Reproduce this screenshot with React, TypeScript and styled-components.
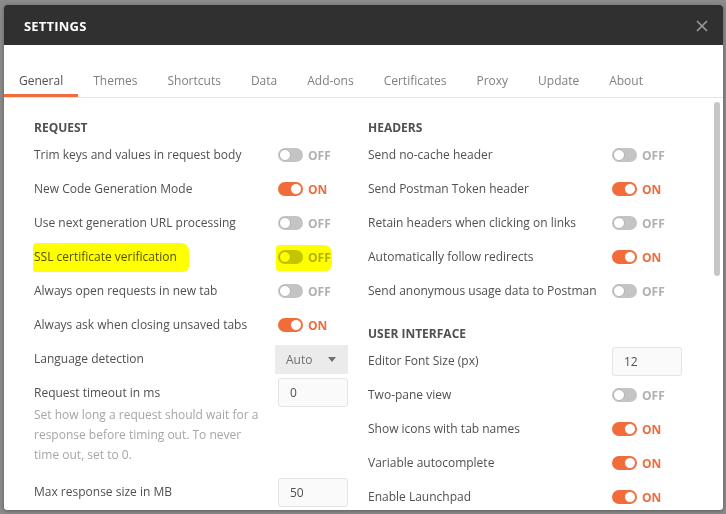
import * as React from "react";
import { createGlobalStyle, styled, css } from "styled-components";

const GlobalStyle = createGlobalStyle`
    html, body {
        margin: 0;
        padding: 0;
        background: #8b8b8b;
    }
    body {
        font-family: "Open Sans", "Liberation Sans", sans-serif;
    }
`;

type ToggleSetting = { label: string; on: boolean; marked?: boolean };

const requestToggles: ToggleSetting[] = [
    { label: "Trim keys and values in request body", on: false },
    { label: "New Code Generation Mode", on: true },
    { label: "Use next generation URL processing", on: false },
    { label: "SSL certificate verification", on: false, marked: true },
    { label: "Always open requests in new tab", on: false },
    { label: "Always ask when closing unsaved tabs", on: true },
];

const headerToggles: ToggleSetting[] = [
    { label: "Send no-cache header", on: false },
    { label: "Send Postman Token header", on: true },
    { label: "Retain headers when clicking on links", on: false },
    { label: "Automatically follow redirects", on: true },
    { label: "Send anonymous usage data to Postman", on: false },
];

const uiToggles: ToggleSetting[] = [
    { label: "Two-pane view", on: false },
    { label: "Show icons with tab names", on: true },
    { label: "Variable autocomplete", on: true },
    { label: "Enable Launchpad", on: true },
];

const tabs = ["General", "Themes", "Shortcuts", "Data", "Add-ons", "Certificates", "Proxy", "Update", "About"];

const Page = styled.div`
    height: 514px;
    box-sizing: border-box;
    padding: 5px 3px 4px 4px;
    overflow: hidden;
`;

const Modal = styled.div`
    height: 505px;
    display: flex;
    flex-direction: column;
    background: #ffffff;
    border-radius: 3px;
    overflow: hidden;
    box-shadow: 0 1px 4px rgba(0, 0, 0, 0.35);
`;

const TitleBar = styled.div`
    flex: 0 0 40px;
    display: flex;
    align-items: center;
    justify-content: space-between;
    background: #303030;
    padding: 1px 14px 0 20px;
    box-sizing: border-box;
`;

const Title = styled.div`
    color: #ffffff;
    font-size: 13px;
    font-weight: 700;
    letter-spacing: 0.2px;
`;

const CloseButton = styled.div`
    width: 14px;
    height: 14px;
    display: flex;
    align-items: center;
    justify-content: center;
`;

const TabBar = styled.div`
    flex: 0 0 52px;
    display: flex;
    align-items: flex-end;
    border-bottom: 1px solid #e4e4e4;
`;

const Tab = styled.div<{ $active?: boolean }>`
    height: 33px;
    padding: 6px 15px 0;
    box-sizing: border-box;
    font-size: 12px;
    line-height: 22px;
    color: ${(p) => (p.$active ? "#505050" : "#808080")};
    border-bottom: 3px solid ${(p) => (p.$active ? "#f26b3a" : "transparent")};
`;

const Body = styled.div`
    flex: 1;
    display: flex;
    min-height: 0;
    overflow: hidden;
`;

const Columns = styled.div`
    flex: 1;
    display: flex;
    gap: 20px;
    padding: 20px 0 0 30px;
`;

const Column = styled.div`
    width: 314px;
    display: flex;
    flex-direction: column;
    & > * {
        flex-shrink: 0;
    }
`;

const Heading = styled.div<{ $spaced?: boolean }>`
    font-size: 12px;
    font-weight: 700;
    line-height: 20px;
    color: #505050;
    margin-top: ${(p) => (p.$spaced ? "16px" : "0")};
`;

const Row = styled.div`
    display: grid;
    grid-template-columns: 244px 70px;
    height: 34px;
    align-items: center;
`;

const Block = styled.div`
    display: grid;
    grid-template-columns: 244px 70px;
    align-items: start;
    margin-bottom: 10px;
`;

const Label = styled.div<{ $top?: boolean }>`
    font-size: 12px;
    line-height: 20px;
    color: #505050;
    white-space: nowrap;
    ${(p) =>
        p.$top &&
        css`
            padding-top: 7px;
        `}
`;

const Description = styled.div`
    font-size: 12px;
    line-height: 20px;
    color: #a6a6a6;
    width: 230px;
    margin-top: 2px;
`;

const ToggleWrap = styled.div`
    display: flex;
    align-items: center;
    gap: 5px;
`;

const Track = styled.div<{ $on: boolean }>`
    position: relative;
    width: 25px;
    height: 14px;
    border-radius: 7px;
    background: ${(p) => (p.$on ? "#f26b3a" : "#c4c4c4")};
`;

const Knob = styled.div<{ $on: boolean }>`
    position: absolute;
    top: 1px;
    left: ${(p) => (p.$on ? "12px" : "1px")};
    width: 12px;
    height: 12px;
    box-sizing: border-box;
    border-radius: 50%;
    background: #ffffff;
    border: 1px solid ${(p) => (p.$on ? "#f26b3a" : "#b4b4b4")};
`;

const State = styled.span<{ $on: boolean }>`
    font-size: 12px;
    font-weight: 700;
    color: ${(p) => (p.$on ? "#f26b3a" : "#b0b0b0")};
`;

const Marker = styled.span<{ $wide?: boolean }>`
    position: relative;
    display: inline-flex;
    align-items: center;
    gap: 5px;
    &::after {
        content: "";
        position: absolute;
        top: -4px;
        bottom: -5px;
        left: ${(p) => (p.$wide ? "-1px" : "-2px")};
        right: ${(p) => (p.$wide ? "-12px" : "-1px")};
        background: #ffff00;
        mix-blend-mode: multiply;
        border-radius: 4px 8px 6px 3px;
        pointer-events: none;
    }
`;

const Select = styled.div`
    margin-left: -3px;
    width: 73px;
    height: 29px;
    box-sizing: border-box;
    background: #ebebeb;
    display: flex;
    align-items: center;
    justify-content: space-between;
    padding: 0 12px 0 11px;
    font-size: 12px;
    color: #707070;
`;

const Caret = styled.span`
    width: 0;
    height: 0;
    border-left: 4px solid transparent;
    border-right: 4px solid transparent;
    border-top: 5px solid #707070;
`;

const Input = styled.div<{ $offset?: boolean }>`
    width: 70px;
    height: 29px;
    box-sizing: border-box;
    border: 1px solid #e4e4e4;
    border-radius: 3px;
    background: #fafafa;
    padding-left: 11px;
    display: flex;
    align-items: center;
    font-size: 12px;
    color: #505050;
    margin-top: ${(p) => (p.$offset ? "2px" : "0")};
`;

const ScrollTrack = styled.div`
    width: 6px;
    margin: 4px 3px 0 0;
`;

const ScrollThumb = styled.div`
    height: 174px;
    border-radius: 3px;
    background: #c6c6c6;
`;

const Toggle = ({ on }: { on: boolean }) => (
    <>
        <Track $on={on}>
            <Knob $on={on} />
        </Track>
        <State $on={on}>{on ? "ON" : "OFF"}</State>
    </>
);

const ToggleRow = ({ label, on, marked }: ToggleSetting) => (
    <Row>
        <Label>{marked ? <Marker $wide>{label}</Marker> : label}</Label>
        <ToggleWrap>
            {marked ? (
                <Marker>
                    <Toggle on={on} />
                </Marker>
            ) : (
                <Toggle on={on} />
            )}
        </ToggleWrap>
    </Row>
);

const App = () => {
    return (
        <Page>
            <GlobalStyle />
            <Modal>
                <TitleBar>
                    <Title>SETTINGS</Title>
                    <CloseButton>
                        <svg width="12" height="12" viewBox="0 0 12 12">
                            <path d="M1 1 L11 11 M11 1 L1 11" stroke="#9c9c9c" strokeWidth="1.6" />
                        </svg>
                    </CloseButton>
                </TitleBar>
                <TabBar>
                    {tabs.map((t, i) => (
                        <Tab key={t} $active={i === 0}>
                            {t}
                        </Tab>
                    ))}
                </TabBar>
                <Body>
                    <Columns>
                        <Column>
                            <Heading>REQUEST</Heading>
                            {requestToggles.map((s) => (
                                <ToggleRow key={s.label} {...s} />
                            ))}
                            <Row>
                                <Label>Language detection</Label>
                                <Select>
                                    Auto
                                    <Caret />
                                </Select>
                            </Row>
                            <Block>
                                <div>
                                    <Label $top>Request timeout in ms</Label>
                                    <Description>
                                        Set how long a request should wait for a response before timing out. To never
                                        time out, set to 0.
                                    </Description>
                                </div>
                                <Input $offset>0</Input>
                            </Block>
                            <Row>
                                <Label>Max response size in MB</Label>
                                <Input>50</Input>
                            </Row>
                        </Column>
                        <Column>
                            <Heading>HEADERS</Heading>
                            {headerToggles.map((s) => (
                                <ToggleRow key={s.label} {...s} />
                            ))}
                            <Heading $spaced>USER INTERFACE</Heading>
                            <Row>
                                <Label>Editor Font Size (px)</Label>
                                <Input>12</Input>
                            </Row>
                            {uiToggles.map((s) => (
                                <ToggleRow key={s.label} {...s} />
                            ))}
                        </Column>
                    </Columns>
                    <ScrollTrack>
                        <ScrollThumb />
                    </ScrollTrack>
                </Body>
            </Modal>
        </Page>
    );
};

export default App;
